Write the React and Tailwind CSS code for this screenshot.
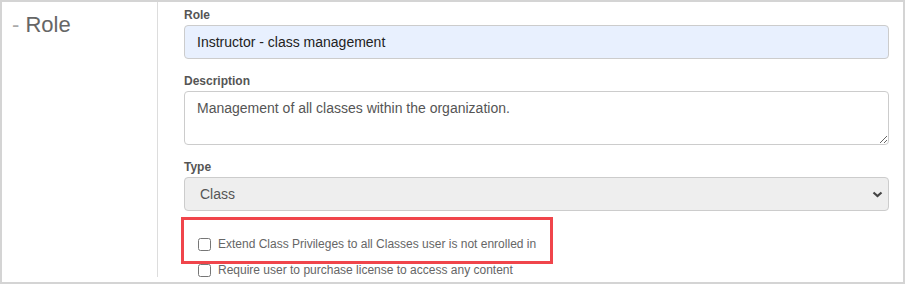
import React from 'react';

export default function App() {
    return (
        <div className="w-[905px] h-[284px] overflow-hidden bg-white border-2 border-[#d4d4d4] flex font-['Liberation_Sans',Arial,sans-serif]">
            {/* left heading column */}
            <div className="w-[156px] shrink-0 h-[275px] border-r border-[#dddddd] pl-[10px] pt-[10px]">
                <h2 className="text-[22px] leading-[25px] text-[#666666]">
                    <span className="text-[#aaaaaa]">-</span> Role
                </h2>
            </div>

            {/* form column */}
            <div className="flex-1 pl-[26px] pr-[14px] pt-[5px]">
                <label className="block text-[12px] leading-[17px] font-bold text-[#555555] mb-[1px]">Role</label>
                <input
                    type="text"
                    readOnly
                    defaultValue="Instructor - class management"
                    className="block w-full h-[34px] px-[12px] text-[14px] text-[#222222] bg-[#e8f0fe] border border-[#cccccc] rounded-[4px] outline-none mb-[14px]"
                />

                <label className="block text-[12px] leading-[17px] font-bold text-[#555555] mb-[1px]">Description</label>
                <textarea
                    readOnly
                    defaultValue="Management of all classes within the organization."
                    className="block w-full h-[54px] px-[12px] pt-[6px] text-[14px] leading-[20px] text-[#555555] bg-white border border-[#cccccc] rounded-[4px] outline-none mb-[14px]"
                />

                <label className="block text-[12px] leading-[17px] font-bold text-[#555555] mb-[1px]">Type</label>
                <div className="relative">
                    <select
                        defaultValue="Class"
                        className="block w-full h-[34px] pl-[15px] pr-[30px] text-[14px] text-[#555555] bg-[#eeeeee] border border-[#cccccc] rounded-[4px] appearance-none outline-none"
                    >
                        <option>Class</option>
                    </select>
                    <svg className="absolute right-[6px] top-[14px] pointer-events-none" width="11" height="7" viewBox="0 0 11 7">
                        <polyline points="1.5,1.5 5.5,5 9.5,1.5" fill="none" stroke="#444444" strokeWidth="2.2" />
                    </svg>
                </div>

                <div className="relative mt-[20px] h-[26px] pl-[14px] flex items-center gap-[7px]">
                    <input type="checkbox" className="w-[13px] h-[13px] m-0" />
                    <span className="text-[12px] text-[#666666]">Extend Class Privileges to all Classes user is not enrolled in</span>
                    <div className="absolute left-[-3px] top-[-14px] w-[372px] h-[47px] border-[3px] border-[#f0454b] pointer-events-none" />
                </div>
                <div className="h-[26px] pl-[14px] flex items-center gap-[7px]">
                    <input type="checkbox" className="w-[13px] h-[13px] m-0" />
                    <span className="text-[12px] text-[#666666]">Require user to purchase license to access any content</span>
                </div>
            </div>
        </div>
    );
}
